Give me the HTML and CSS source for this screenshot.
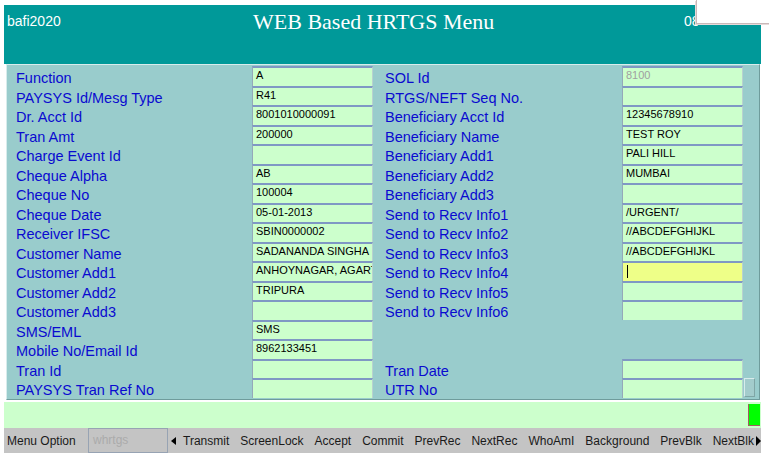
FILE: index.html
```html
<!DOCTYPE html>
<html>
<head>
<meta charset="utf-8">
<title>WEB Based HRTGS Menu</title>
<link rel="stylesheet" href="styles.css">
</head>
<body>
<div class="corner-box"></div>
<div class="page">
  <div class="header">
    <div class="brand">bafi2020</div>
    <div class="title">WEB Based HRTGS Menu</div>
    <div class="date">08-01-2013</div>
  </div>
  <div class="panel">
    <div class="grid">
      <div class="lbl">Function</div><div class="fld">A</div>
      <div class="lbl r">SOL Id</div><div class="fld grey">8100</div>

      <div class="lbl">PAYSYS Id/Mesg Type</div><div class="fld">R41</div>
      <div class="lbl r">RTGS/NEFT Seq No.</div><div class="fld"></div>

      <div class="lbl">Dr. Acct Id</div><div class="fld">8001010000091</div>
      <div class="lbl r">Beneficiary Acct Id</div><div class="fld">12345678910</div>

      <div class="lbl">Tran Amt</div><div class="fld">200000</div>
      <div class="lbl r">Beneficiary Name</div><div class="fld">TEST ROY</div>

      <div class="lbl">Charge Event Id</div><div class="fld"></div>
      <div class="lbl r">Beneficiary Add1</div><div class="fld">PALI HILL</div>

      <div class="lbl">Cheque Alpha</div><div class="fld">AB</div>
      <div class="lbl r">Beneficiary Add2</div><div class="fld">MUMBAI</div>

      <div class="lbl">Cheque No</div><div class="fld">100004</div>
      <div class="lbl r">Beneficiary Add3</div><div class="fld"></div>

      <div class="lbl">Cheque Date</div><div class="fld">05-01-2013</div>
      <div class="lbl r">Send to Recv Info1</div><div class="fld">/URGENT/</div>

      <div class="lbl">Receiver IFSC</div><div class="fld">SBIN0000002</div>
      <div class="lbl r">Send to Recv Info2</div><div class="fld">//ABCDEFGHIJKL</div>

      <div class="lbl">Customer Name</div><div class="fld">SADANANDA SINGHA</div>
      <div class="lbl r">Send to Recv Info3</div><div class="fld">//ABCDEFGHIJKL</div>

      <div class="lbl">Customer Add1</div><div class="fld">ANHOYNAGAR, AGARTALA</div>
      <div class="lbl r">Send to Recv Info4</div><div class="fld active"><span class="caret"></span></div>

      <div class="lbl">Customer Add2</div><div class="fld">TRIPURA</div>
      <div class="lbl r">Send to Recv Info5</div><div class="fld"></div>

      <div class="lbl">Customer Add3</div><div class="fld"></div>
      <div class="lbl r">Send to Recv Info6</div><div class="fld"></div>

      <div class="lbl">SMS/EML</div><div class="fld">SMS</div>
      <div class="lbl r"></div><div class="blank"></div>

      <div class="lbl">Mobile No/Email Id</div><div class="fld">8962133451</div>
      <div class="lbl r"></div><div class="blank"></div>

      <div class="lbl">Tran Id</div><div class="fld"></div>
      <div class="lbl r">Tran Date</div><div class="fld"></div>

      <div class="lbl">PAYSYS Tran Ref No</div><div class="fld"></div>
      <div class="lbl r">UTR No</div><div class="fld"></div><div class="scroll"></div>
    </div>
  </div>
  <div class="status">
    <div class="led"></div>
  </div>
  <div class="toolbar">
    <div class="menu-label">Menu Option</div>
    <div class="menu-box">whrtgs</div>
    <div class="tri-left"></div>
    <div class="actions">
      <span>Transmit</span><span>ScreenLock</span><span>Accept</span><span>Commit</span><span>PrevRec</span><span>NextRec</span><span>WhoAmI</span><span>Background</span><span>PrevBlk</span><span>NextBlk</span>
    </div>
    <div class="tri-right"></div>
  </div>
</div>
</body>
</html>
```
FILE: styles.css
```css
html, body {
  margin: 0;
  padding: 0;
  background: #ffffff;
  font-family: "Liberation Sans", Arial, sans-serif;
}

.corner-box {
  position: absolute;
  top: 0;
  left: 696px;
  width: 73px;
  height: 23px;
  background: #ffffff;
  border-left: 1px solid #c9b9b9;
  border-bottom: 1px solid #c9b9b9;
  box-shadow: -1px 1px 0 #e6dada;
  z-index: 5;
}

.page {
  margin: 5px 0 0 4px;
  width: 757px;
}

.header {
  height: 59px;
  background: #009999;
  color: #ffffff;
  display: flex;
  align-items: flex-start;
  overflow: hidden;
}

.brand {
  width: 246px;
  padding-left: 3px;
  padding-top: 8px;
  font-size: 14px;
  line-height: 16px;
}

.title {
  width: 431px;
  padding-top: 5px;
  font-family: "Liberation Serif", "Times New Roman", serif;
  font-size: 22px;
  line-height: 24px;
  white-space: nowrap;
}

.date {
  width: 14px;
  overflow: hidden;
  padding-top: 8px;
  font-size: 14px;
  line-height: 16px;
  white-space: nowrap;
}

.panel {
  margin-left: 2px;
  width: 752px;
  height: 334px;
  background: #99cccc;
  border-top: 1px solid #d8ecec;
  border-left: 1px solid #d8ecec;
  border-right: 1px solid #6f9c9c;
  border-bottom: 1px solid #6f9c9c;
}

.grid {
  display: grid;
  grid-template-columns: 236px 121px 249px 121px 12px;
  grid-auto-rows: 19.5px;
  padding: 1px 0 0 9px;
}

.lbl {
  color: #0a0ad0;
  font-size: 14.5px;
  line-height: 25px;
  height: 19.5px;
  white-space: nowrap;
}

.lbl.r {
  grid-column: 3;
  padding-left: 12px;
}

.lbl:not(.r) {
  grid-column: 1;
}

.fld {
  box-sizing: border-box;
  height: 19.5px;
  background: #ccffcc;
  border-top: 2px solid #7f98c4;
  border-left: 1px solid #94a9b9;
  border-right: 1px solid #b9d2cf;
  border-bottom: 0;
  font-size: 11px;
  line-height: 15px;
  color: #000000;
  padding-left: 3px;
  white-space: nowrap;
  overflow: hidden;
}

.fld.grey {
  color: #a0a0a0;
}

.fld.active {
  background: #eeff88;
}

.caret {
  display: inline-block;
  width: 1px;
  height: 13px;
  background: #000000;
  vertical-align: middle;
  margin-left: 1px;
}

.blank {
  height: 19.5px;
}

.scroll {
  box-sizing: border-box;
  margin-left: 1px;
  width: 11px;
  height: 19px;
  background: #a3cccc;
  border: 1px solid #d8ecec;
  border-right-color: #7fa6a6;
  border-bottom-color: #7fa6a6;
}

.status {
  margin-top: 2px;
  height: 26px;
  background: #ccffcc;
  display: flex;
  justify-content: flex-end;
  align-items: center;
}

.led {
  box-sizing: border-box;
  width: 12px;
  height: 22px;
  background: #00ff00;
  border-left: 1px solid #a06060;
  border-bottom: 1px solid #a06060;
  margin-right: 1px;
}

.toolbar {
  height: 25px;
  background: #c4c4c4;
  display: flex;
  align-items: center;
  font-size: 12px;
  color: #1a1a1a;
}

.menu-label {
  width: 81px;
  padding-left: 3px;
  white-space: nowrap;
}

.menu-box {
  box-sizing: border-box;
  width: 80px;
  height: 25px;
  border: 1px solid #97a3b3;
  color: #ababab;
  padding-left: 4px;
  line-height: 23px;
}

.tri-left {
  width: 0;
  height: 0;
  margin-left: 3px;
  border-top: 4px solid transparent;
  border-bottom: 4px solid transparent;
  border-right: 5px solid #000000;
}

.actions {
  flex: 1;
  display: flex;
  justify-content: space-between;
  margin-left: 7px;
  margin-right: 2px;
  white-space: nowrap;
}

.tri-right {
  width: 0;
  height: 0;
  border-top: 5px solid transparent;
  border-bottom: 5px solid transparent;
  border-left: 5px solid #000000;
}
```
